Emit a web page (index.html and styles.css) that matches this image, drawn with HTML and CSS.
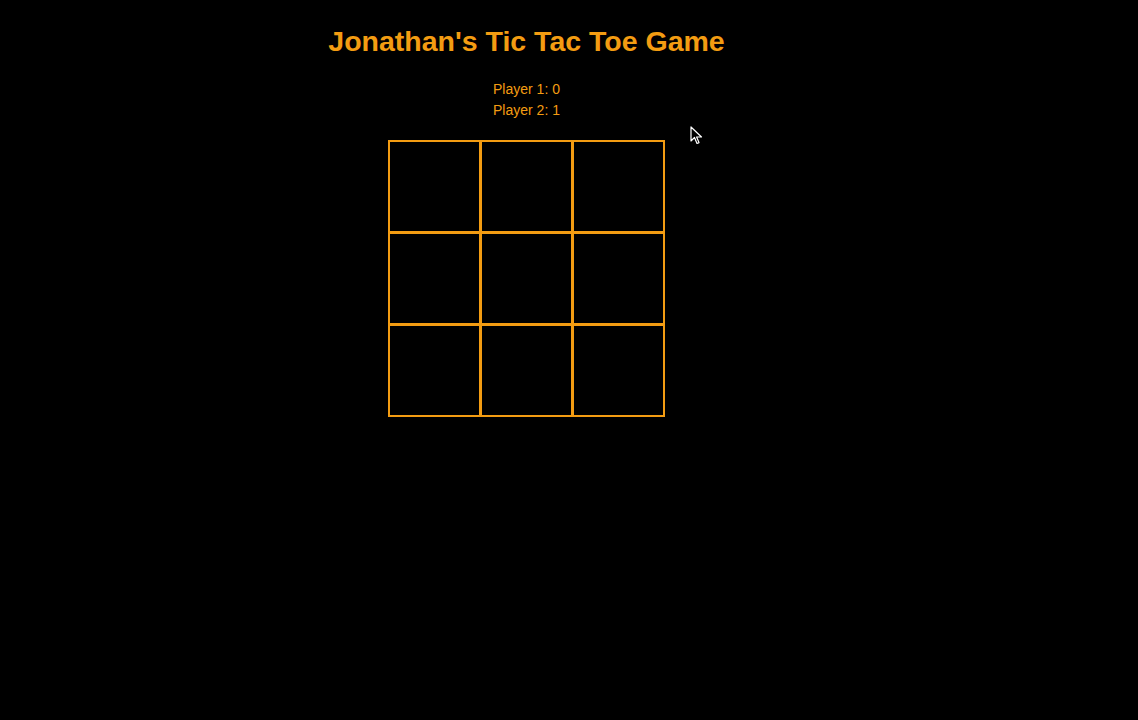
FILE: index.html
```html
<!DOCTYPE html>
<html>
<head>
<meta charset="utf-8">
<link rel="stylesheet" href="styles.css">
</head>
<body>
<div class="page">
  <h1 class="title">Jonathan's Tic Tac Toe Game</h1>
  <div class="scores">
    <div class="score">Player 1: 0</div>
    <div class="score">Player 2: 1</div>
  </div>
  <div class="board">
    <div class="cell"></div><div class="cell"></div><div class="cell"></div>
    <div class="cell"></div><div class="cell"></div><div class="cell"></div>
    <div class="cell"></div><div class="cell"></div><div class="cell"></div>
  </div>
</div>
<svg class="cursor" width="13" height="19" viewBox="0 0 13 19">
  <path d="M1 1 L1 15 L4.5 11.5 L7 17.5 L9 16.6 L6.6 11 L11.5 11 Z" fill="#000" stroke="#fff" stroke-width="1.2" stroke-linejoin="round"/>
</svg>
</body>
</html>
```
FILE: styles.css
```css
html, body {
  background: #000;
}
body {
  margin: 0;
  padding: 0;
  font-family: "Liberation Sans", Arial, sans-serif;
  color: #f39c12;
}
.page {
  width: 1037px;
  margin-left: 8px;
  text-align: center;
}
.title {
  margin: 0;
  padding-top: 23px;
  font-size: 28.5px;
  font-weight: bold;
  line-height: 36px;
}
.scores {
  margin-top: 20px;
  font-size: 14px;
  line-height: 21px;
}
.board {
  margin: 19px auto 0;
  display: grid;
  grid-template-columns: repeat(3, 89px);
  grid-auto-rows: 89px;
  gap: 3px;
  padding: 2px;
  width: 273px;
  background: #f39c12;
}
.cell {
  background: #000;
}
.cursor {
  position: absolute;
  left: 690px;
  top: 126px;
}
```
